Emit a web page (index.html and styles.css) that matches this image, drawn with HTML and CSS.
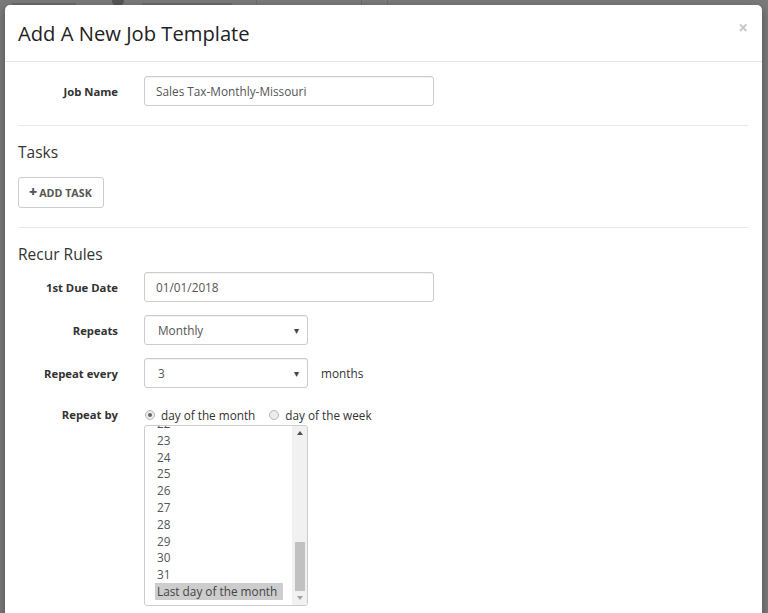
FILE: index.html
```html
<!DOCTYPE html>
<html lang="en">
<head>
<meta charset="utf-8">
<title>Add A New Job Template</title>
<link rel="stylesheet" href="styles.css">
</head>
<body>
<div class="page">
  <div class="page-top">
    <span class="ghost g1"></span>
    <span class="ghost-dot"></span>
    <span class="ghost g2"></span>
    <span class="vline v1"></span>
    <span class="vline v2"></span>
    <span class="vline v3"></span>
  </div>
</div>

<div class="modal">
  <div class="modal-header">
    <h4 class="modal-title">Add A New Job Template</h4>
    <span class="close">×</span>
  </div>
  <div class="modal-body">
    <div class="form-row row-first">
      <label class="label">Job Name</label>
      <div class="field field-wide">Sales Tax-Monthly-Missouri</div>
    </div>

    <div class="divider"></div>

    <h5 class="section-title">Tasks</h5>
    <div class="btn"><span class="plus">+</span>ADD TASK</div>

    <div class="divider"></div>

    <h5 class="section-title">Recur Rules</h5>

    <div class="form-row row-recur">
      <label class="label">1st Due Date</label>
      <div class="field field-wide">01/01/2018</div>
    </div>

    <div class="form-row">
      <label class="label">Repeats</label>
      <div class="field field-select"><span class="sel-text">Monthly</span><span class="caret">▾</span></div>
    </div>

    <div class="form-row">
      <label class="label">Repeat every</label>
      <div class="field field-select"><span class="sel-text">3</span><span class="caret">▾</span></div>
      <span class="suffix">months</span>
    </div>

    <div class="form-row row-by">
      <label class="label label-by">Repeat by</label>
      <div class="by-col">
        <div class="radios">
          <span class="radio checked"></span><span class="radio-text">day of the month</span>
          <span class="radio"></span><span class="radio-text">day of the week</span>
        </div>
        <div class="listbox">
          <div class="list-items">
            <span class="opt opt-cut">22</span>
            <span class="opt">23</span>
            <span class="opt">24</span>
            <span class="opt">25</span>
            <span class="opt">26</span>
            <span class="opt">27</span>
            <span class="opt">28</span>
            <span class="opt">29</span>
            <span class="opt">30</span>
            <span class="opt">31</span>
            <span class="opt selected">Last day of the month</span>
          </div>
          <div class="scrollbar">
            <span class="arrow arrow-up"></span>
            <div class="track"><span class="thumb"></span></div>
            <span class="arrow arrow-down"></span>
          </div>
        </div>
      </div>
    </div>
  </div>
</div>
</body>
</html>
```

FILE: styles.css
```css
html, body {
  margin: 0;
  padding: 0;
}

body {
  width: 768px;
  height: 613px;
  overflow: hidden;
  background: #7a7a7a;
  font-family: "Open Sans", "Noto Sans", sans-serif;
  color: #333;
}

.page {
  height: 613px;
}

.page-top {
  display: flex;
  align-items: flex-start;
  height: 6px;
}

.ghost {
  display: block;
  height: 2px;
  margin-top: 3px;
  background: #6a6a6a;
  border-radius: 1px;
}

.g1 { width: 64px; margin-left: 12px; }
.ghost-dot {
  width: 12px;
  height: 10px;
  margin-top: -4px;
  margin-left: 36px;
  border-radius: 50%;
  background: #555;
}
.g2 { width: 90px; margin-left: 18px; }

.vline {
  display: block;
  width: 1px;
  height: 6px;
  background: #6c6c6c;
}
.v1 { margin-left: 24px; }
.v2 { margin-left: 104px; }
.v3 { margin-left: 25px; }

.modal {
  position: absolute;
  top: 5px;
  left: 5px;
  width: 757px;
  bottom: -20px;
  background: #fff;
  border-radius: 5px 5px 0 0;
  box-shadow: 0 3px 9px rgba(0, 0, 0, 0.35);
}

.modal-header {
  display: flex;
  align-items: flex-start;
  justify-content: space-between;
  padding: 15px 14px 15px 13px;
  border-bottom: 1px solid #e5e5e5;
}

.modal-title {
  margin: 0;
  font-size: 20.2px;
  line-height: 26px;
  font-weight: 400;
  color: #222;
}

.close {
  font-size: 17px;
  line-height: 14px;
  font-weight: 700;
  color: #c8c8c8;
  margin-top: 1px;
}

.modal-body {
  padding: 14px 14px 0 13px;
}

.form-row {
  display: flex;
  align-items: center;
  height: 30px;
  margin-top: 13px;
}

.row-first {
  margin-top: 0;
}

.form-row.row-recur {
  margin-top: 7px;
}

.label {
  width: 100px;
  flex: none;
  text-align: right;
  font-size: 11.3px;
  font-weight: 700;
  color: #333;
  margin-right: 26px;
}

.field {
  box-sizing: border-box;
  height: 30px;
  border: 1px solid #ccc;
  border-radius: 3px;
  box-shadow: inset 0 1px 1px rgba(0, 0, 0, 0.06);
  font-size: 11.8px;
  color: #555;
  display: flex;
  align-items: center;
  background: #fff;
}

.field-wide {
  width: 290px;
  padding-left: 11px;
}

.field-select {
  width: 164px;
  padding: 0 8px 0 13px;
  justify-content: space-between;
}

.sel-text {
  color: #555;
}

.caret {
  font-size: 10px;
  color: #444;
}

.suffix {
  margin-left: 13px;
  font-size: 11.8px;
  color: #333;
}

.divider {
  height: 1px;
  background: #e8e8e8;
  margin-top: 19px;
}

.section-title {
  margin: 15px 0 0;
  font-size: 15.5px;
  line-height: 22px;
  font-weight: 400;
  color: #333;
}

.btn {
  display: inline-flex;
  align-items: center;
  box-sizing: border-box;
  height: 31px;
  width: 86px;
  margin-top: 14px;
  padding-left: 10px;
  border: 1px solid #ccc;
  border-radius: 3px;
  background: #fff;
  font-size: 10.7px;
  font-weight: 700;
  color: #555;
}

.plus {
  font-size: 14px;
  font-weight: 800;
  margin-right: 2px;
  margin-top: -2px;
  color: #555;
}

.row-by {
  height: auto;
  align-items: flex-start;
  margin-top: 17px;
}

.label-by {
  line-height: 20px;
}

.by-col {
  display: flex;
  flex-direction: column;
}

.radios {
  display: flex;
  align-items: center;
  height: 20px;
  font-size: 11.75px;
  color: #333;
}

.radio {
  box-sizing: border-box;
  width: 10px;
  height: 10px;
  border-radius: 50%;
  border: 1px solid #b8b8b8;
  background: #ececec;
  margin-left: 1px;
  margin-right: 6px;
  display: flex;
  align-items: center;
  justify-content: center;
}

.radio.checked::after {
  content: "";
  width: 4px;
  height: 4px;
  border-radius: 50%;
  background: #666;
}

.radio-text + .radio {
  margin-left: 14px;
}

.listbox {
  box-sizing: border-box;
  width: 164px;
  height: 181px;
  border: 1px solid #ccc;
  border-radius: 3px;
  display: flex;
  overflow: hidden;
  background: #fff;
}

.list-items {
  flex: 1;
  display: flex;
  flex-direction: column;
  align-items: flex-start;
  overflow: hidden;
  padding-left: 10px;
}

.opt {
  font-size: 11.8px;
  line-height: 16.8px;
  color: #555;
  padding: 0 2px;
}

.opt-cut {
  margin-top: -11px;
}

.opt.selected {
  background: #cdcdcd;
  color: #444;
  padding-right: 6px;
}

.scrollbar {
  width: 15px;
  flex: none;
  display: flex;
  flex-direction: column;
  align-items: center;
  background: #f1f1f1;
}

.arrow {
  display: block;
  width: 0;
  height: 0;
  border-left: 3.5px solid transparent;
  border-right: 3.5px solid transparent;
  flex: none;
}

.arrow-up {
  margin-top: 5px;
  border-bottom: 4px solid #505050;
}

.arrow-down {
  margin-top: 5px;
  margin-bottom: 5px;
  border-top: 4px solid #a3a3a3;
}

.track {
  flex: 1;
  width: 100%;
  display: flex;
  flex-direction: column;
  justify-content: flex-end;
  align-items: center;
}

.thumb {
  display: block;
  width: 10px;
  height: 49px;
  background: #c1c1c1;
}
```
